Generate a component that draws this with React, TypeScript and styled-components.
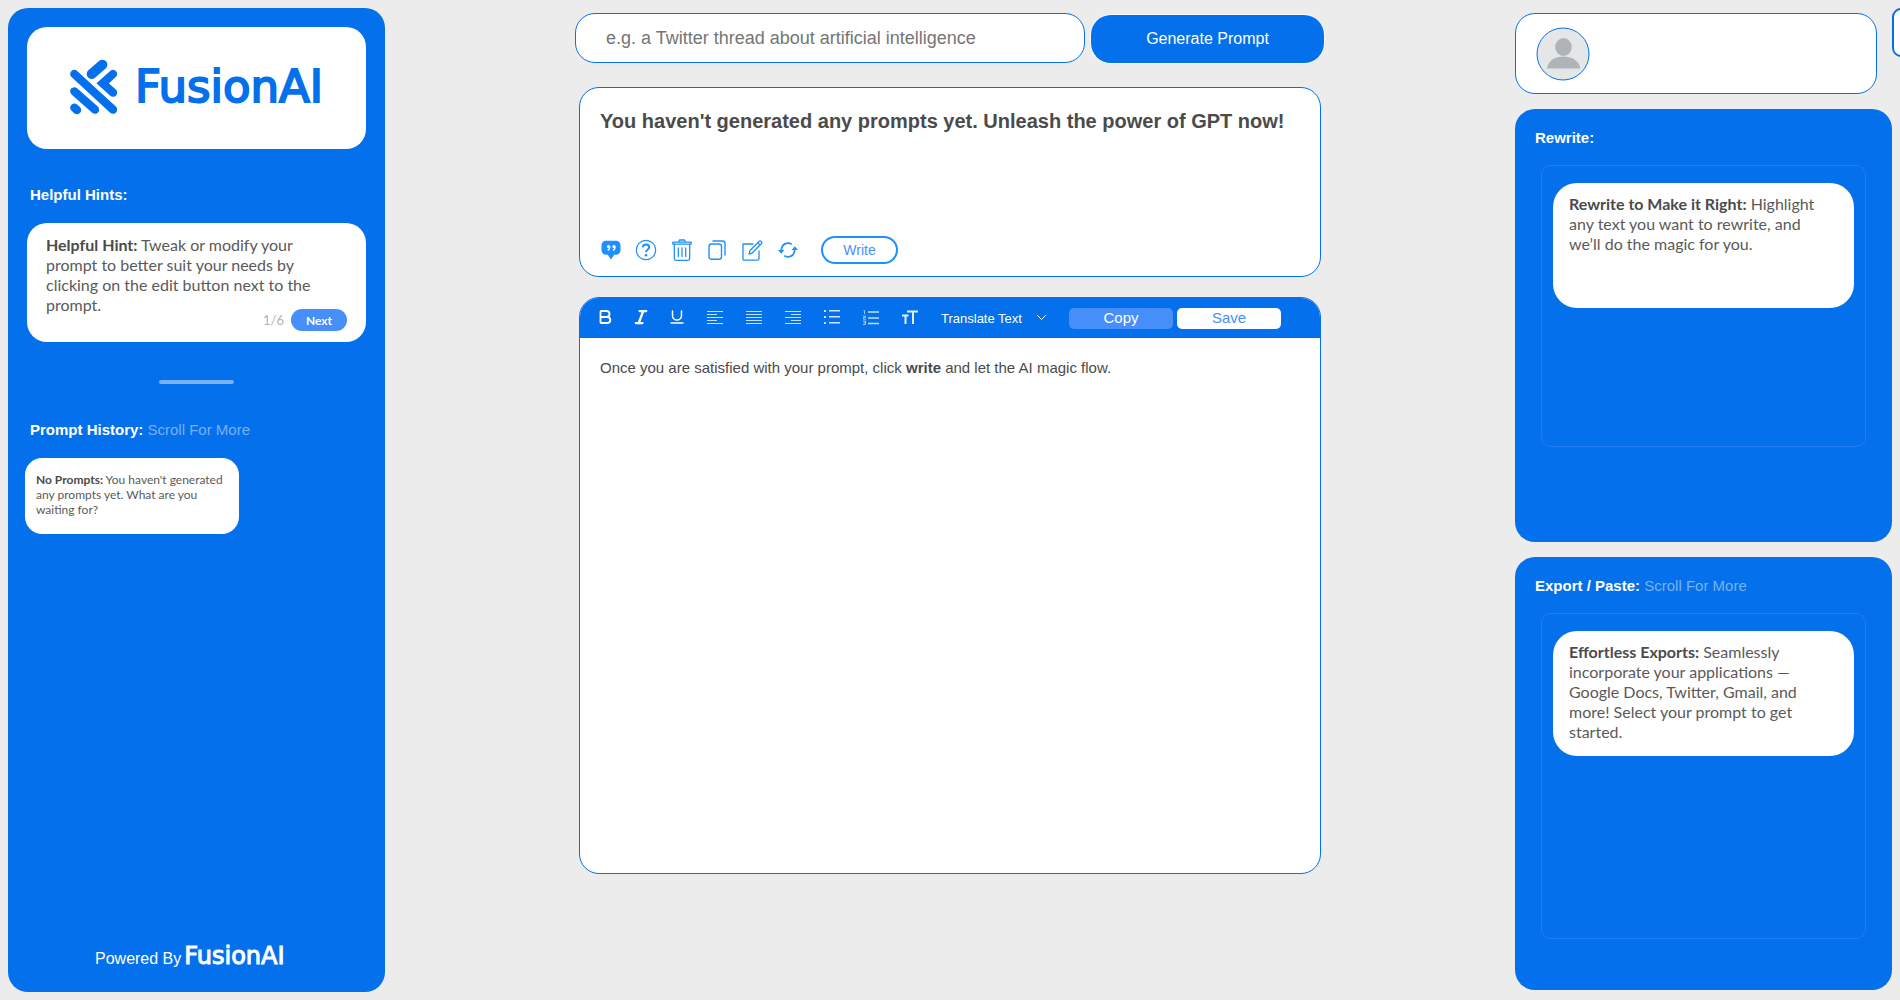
import React from "react";
import styled, { createGlobalStyle } from "styled-components";
import { Bold, Italic, Underline } from "lucide-react";

const blue = "#0570eb";
const sky = "#1e90ff";
const ink = "#4b4b4b";
const sans = `"Liberation Sans", Arial, Helvetica, sans-serif`;
const rounded = `Lato, "Open Sans", sans-serif`;

const GlobalStyle = createGlobalStyle`
  * { box-sizing: border-box; }
  body {
    margin: 0;
    background: #ececec;
    color: ${ink};
    font-family: ${sans};
    overflow: hidden;
  }
  button, input, select { font-family: inherit; }
  button { cursor: pointer; }
  h2, p { margin: 0; }
`;

const Page = styled.div`
  position: relative;
  display: grid;
  grid-template-columns: 377px minmax(0, 750px) 377px;
  justify-content: space-between;
  min-height: 100vh;
  padding: 0 8px;
  overflow: hidden;
`;

const Sidebar = styled.aside`
  display: flex;
  flex-direction: column;
  margin: 8px 0;
  padding: 19px 19px 24px;
  background: ${blue};
  border-radius: 20px;
`;

const LogoCard = styled.div`
  display: flex;
  align-items: center;
  justify-content: center;
  gap: 17px;
  height: 122px;
  padding-bottom: 3px;
  background: #fff;
  border-radius: 20px;
`;

const Wordmark = styled.span<{ $size: number; $stroke: number }>`
  font-family: "DejaVu Sans", sans-serif;
  font-size: ${(p) => p.$size}px;
  line-height: 1;
  -webkit-text-stroke: ${(p) => p.$stroke}px currentColor;
  stroke-linejoin: round;
`;

const LogoWord = styled(Wordmark)`
  color: ${blue};
`;

const Title = styled.h2`
  color: #fff;
  font-size: 15px;
  line-height: 18px;
  font-weight: 700;
`;

const SideTitle = styled(Title)`
  margin-top: 37px;
  padding-left: 3px;
`;

const Faded = styled.span`
  color: #78b1f5;
  font-weight: 400;
`;

const Note = styled.p`
  color: #5a5a5a;
  font-family: ${rounded};
  font-size: 16px;
  line-height: 20px;
  b { color: ${ink}; }
`;

const HintCard = styled.section`
  display: flex;
  flex-direction: column;
  justify-content: space-between;
  height: 119px;
  margin-top: 19px;
  padding: 12px 19px 11px;
  background: #fff;
  border-radius: 20px;
`;

const HintFooter = styled.div`
  display: flex;
  align-items: center;
  justify-content: flex-end;
  gap: 7px;
  margin-top: -6px;
  color: #b3b3b3;
  font-family: ${rounded};
  font-size: 13px;
`;

const NextButton = styled.button`
  width: 56px;
  height: 22px;
  padding: 0;
  border: 0;
  border-radius: 11px;
  background: #468ffa;
  color: #fff;
  font-family: ${rounded};
  font-size: 12px;
  font-weight: 700;
`;

const Divider = styled.div`
  align-self: center;
  width: 75px;
  height: 4px;
  margin-top: 38px;
  border-radius: 2px;
  background: #78b1f5;
`;

const HistoryList = styled.div`
  width: 216px;
  height: 268px;
  margin: 18px 0 0 -3px;
  border: 1px solid #0872ec;
  border-radius: 17px;
`;

const HistoryCard = styled.article`
  height: 76px;
  padding: 14px 11px;
  background: #fff;
  border-radius: 17px;
  color: #5a5a5a;
  font-family: ${rounded};
  font-size: 12px;
  line-height: 15px;
  b { color: ${ink}; }
`;

const Powered = styled.footer`
  display: flex;
  align-items: baseline;
  gap: 3px;
  margin-top: auto;
  padding-left: 68px;
  color: #fff;
  font-size: 16px;
`;

const Main = styled.main`
  padding-top: 13px;
`;

const SearchRow = styled.form`
  display: grid;
  grid-template-columns: minmax(0, 1fr) 233px;
  gap: 6px;
  padding-right: 1px;
`;

const SearchInput = styled.input`
  height: 50px;
  padding: 0 30px;
  border: 1px solid ${blue};
  border-radius: 20px;
  background: #fff;
  font-size: 18px;
  &::placeholder { color: #757575; opacity: 1; }
`;

const GenerateButton = styled.button`
  height: 48px;
  margin-top: 2px;
  border: 0;
  border-radius: 20px;
  background: ${blue};
  box-shadow: 0 0 0 1px #f5f8fc;
  color: #fff;
  font-size: 16px;
`;

const PromptCard = styled.section`
  display: flex;
  flex-direction: column;
  justify-content: space-between;
  height: 190px;
  margin: 24px 4px 0;
  padding: 21px 20px 12px;
  border: 1px solid ${blue};
  border-radius: 20px;
  background: #fff;
`;

const PromptText = styled.h2`
  font-size: 20px;
  line-height: 24px;
  font-weight: 700;
`;

const Actions = styled.div`
  display: flex;
  align-items: center;
  gap: 22px;
`;

const IconGroup = styled.div`
  display: flex;
  justify-content: space-between;
  width: 199px;
`;

const IconButton = styled.button`
  display: flex;
  align-items: center;
  justify-content: center;
  width: 21px;
  height: 22px;
  padding: 0;
  border: 0;
  background: none;
  color: ${sky};
  svg { flex: none; }
`;

const WriteButton = styled.button`
  width: 77px;
  height: 28px;
  padding: 0;
  border: 2px solid ${sky};
  border-radius: 14px;
  background: #fff;
  color: #468ffa;
  font-size: 14px;
`;

const Editor = styled.section`
  height: 577px;
  margin: 20px 4px 0;
  border: 1px solid ${blue};
  border-radius: 20px;
  background: #fff;
  overflow: hidden;
`;

const Toolbar = styled.div`
  display: flex;
  align-items: center;
  height: 40px;
  padding: 0 39px 0 15px;
  background: ${blue};
  color: #fff;
`;

const ToolGroup = styled.div<{ $gap: number }>`
  display: flex;
  gap: ${(p) => p.$gap}px;
  margin-right: 18px;
  padding-bottom: 2px;
`;

const ToolButton = styled.button`
  display: flex;
  align-items: center;
  justify-content: center;
  width: 20px;
  height: 20px;
  padding: 0;
  border: 0;
  background: none;
  color: #fff;
`;

const TranslateField = styled.label`
  display: flex;
  align-items: center;
  margin: 0 auto 0 3px;
`;

const TranslateSelect = styled.select`
  width: 96px;
  padding: 0;
  border: 0;
  appearance: none;
  background: none;
  color: #fff;
  font-size: 13px;
`;

const EditorButton = styled.button<{ $solid?: boolean }>`
  width: 104px;
  height: 21px;
  margin-left: 4px;
  padding: 0 0 2px;
  border: 0;
  border-radius: 5px;
  background: ${(p) => (p.$solid ? "#fff" : "#468ffa")};
  color: ${(p) => (p.$solid ? "#468ffa" : "#fff")};
  font-size: 15px;
`;

const EditorBody = styled.p`
  padding: 20px;
  font-size: 15px;
  line-height: 20px;
`;

const Right = styled.div`
  padding-top: 13px;
`;

const UserCard = styled.section`
  display: flex;
  align-items: center;
  height: 81px;
  margin-right: 15px;
  padding-left: 20px;
  border: 1px solid ${blue};
  border-radius: 20px;
  background: #fff;
`;

const Panel = styled.section`
  height: 433px;
  margin-top: 15px;
  padding: 20px;
  border-radius: 20px;
  background: ${blue};
`;

const PanelFrame = styled.div<{ $height: number }>`
  height: ${(p) => p.$height}px;
  margin: 18px 6px 0;
  padding: 17px 11px;
  border: 1px solid #1f7ef1;
  border-radius: 10px;
`;

const PanelCard = styled.article`
  height: 125px;
  padding: 11px 30px 11px 16px;
  border-radius: 24px;
  background: #fff;
`;

const DrawerTab = styled.button`
  position: absolute;
  top: 8px;
  right: -42px;
  width: 50px;
  height: 49px;
  border: 2px solid ${blue};
  border-radius: 9px;
  background: #fff;
`;

const stroke = {
  fill: "none",
  stroke: "currentColor",
  strokeLinecap: "round" as const,
  strokeLinejoin: "round" as const,
};

const LogoMark = () => (
  <svg width="48" height="56" viewBox="205 175 144 168" aria-hidden="true">
    <g fill="none" stroke={blue} strokeWidth="25" strokeLinecap="round" strokeLinejoin="round">
      <path d="M218 321L226 328M218 272L280 327M218 220L334 327" />
      <path d="M334 220L303 248L334 276" strokeLinejoin="miter" />
      <path d="M270 220L302 192" strokeWidth="30" />
    </g>
  </svg>
);

const QuoteIcon = () => (
  <svg width="20" height="20" viewBox="0 0 20 20">
    <path fill="currentColor" d="M5 .8h10a4.500 4.500 0 0 1 4.500 4.500v5a4.500 4.500 0 0 1-4.500 4.500h-1.800L10 19.500 6.800 14.800H5A4.500 4.500 0 0 1 .5 10.300v-5A4.500 4.500 0 0 1 5 .8z" />
    <g fill="none" stroke="#fff" strokeWidth="1.300">
      <path d="M8.700 6.500Q8.900 9.300 6.700 10.300M14 6.500Q14.200 9.300 12 10.300" />
    </g>
    <circle cx="7.600" cy="6.600" r="1.600" fill="#fff" />
    <circle cx="12.900" cy="6.600" r="1.600" fill="#fff" />
  </svg>
);

const HelpIcon = () => (
  <svg width="22" height="22" viewBox="0 0 22 22" {...stroke}>
    <circle cx="11" cy="11" r="9.700" strokeWidth="1.200" />
    <path strokeWidth="2" strokeLinecap="butt" d="M7.700 8.400Q7.900 5.400 11 5.400T14.200 8.200C14.200 10.600 11 10.500 11 13.300" />
    <circle cx="11" cy="16.200" r="1.300" fill="currentColor" stroke="none" />
  </svg>
);

const TrashIcon = () => (
  <svg width="20" height="22" viewBox="0 0 20 22" {...stroke} strokeWidth="1.300">
    <path d="M.8 3.200h18.400v1.900H.8zM6.500 3L7.500 1h5l1 2" />
    <path d="M2.300 5.500V19.500Q2.300 21.300 4 21.300H16Q17.700 21.300 17.700 19.500V5.500M6.300 9v8.500M10 9v8.500M13.700 9v8.500" />
  </svg>
);

const CopyIcon = () => (
  <svg width="18" height="20" viewBox="0 0 18 20" {...stroke} strokeWidth="1.400">
    <rect x="1" y="4" width="12.500" height="15.200" rx="2.500" />
    <path d="M5 1h9.500Q17 1 17 3.500V15" />
  </svg>
);

const EditIcon = () => (
  <svg width="21" height="21" viewBox="0 0 21 21" {...stroke} strokeWidth="1.300">
    <path d="M11 4H1V19.500Q1 20.200 1.700 20.200H15.500Q17 20.200 17 18.700V11" />
    <path d="M7 14.200L8 10.500 17.300 1.200Q18.200.5 19.200 1.400T19.500 3.500L10.500 12.800zM15.800 2.800L18 5" />
  </svg>
);

const RefreshIcon = () => (
  <svg width="20" height="16" viewBox="0 0 20 16" {...stroke} strokeWidth="1.800" strokeLinecap="butt">
    <path d="M13.700 2.200Q11.500 1 9.500 1.200Q3.500 2 3.200 8.700M6.300 13.800Q8.500 15 10.500 14.800Q16.500 14 16.800 7.300" />
    <path fill="currentColor" stroke="none" d="M0 8L3.200 11.700 6.400 8zM13.600 8L16.800 4.300 20 8z" />
  </svg>
);

const LinesIcon = ({ rows }: { rows: number[][] }) => (
  <svg width="16" height="15" viewBox="0 0 16 15" stroke="#c9e0fb" strokeWidth="1.200">
    {rows.map(([from, to], i) => (
      <path key={i} d={`M${from} ${i * 3 + 1}.5H${to}`} />
    ))}
  </svg>
);

const BulletIcon = () => (
  <svg width="16" height="15" viewBox="0 0 16 15" fill="#d4e6fc">
    {[1, 7, 13].map((y) => (
      <React.Fragment key={y}>
        <rect x="0" y={y - 1} width="2" height="2" />
        <rect x="5" y={y - 1} width="11" height="1.500" />
      </React.Fragment>
    ))}
  </svg>
);

const NumberIcon = () => (
  <svg width="16" height="15" viewBox="0 0 16 15" fill="none" stroke="#c4ddfb">
    <path d="M5 2H16M5 8H16M5 13.500H16" strokeWidth="1.300" />
    <path d="M.5.500H1.500V4M0 6H2.500V7.500H.5V9.200H3M0 11H2.500V14.500H0M.5 12.700H2.500" strokeWidth=".8" />
  </svg>
);

const SizeIcon = () => (
  <svg width="16" height="14" viewBox="0 0 16 14" fill="none" stroke="#e4effd" strokeWidth="2">
    <path d="M5 1.500H16M11 1.500V14M0 5.500H6.500M3.500 5.500V14" />
  </svg>
);

const Chevron = () => (
  <svg width="9" height="6" viewBox="0 0 9 6" {...stroke} aria-hidden="true">
    <path d="M.5.500L4.500 4.500 8.500.500" />
  </svg>
);

const Avatar = () => (
  <svg width="54" height="54" viewBox="0 0 54 54" role="img" aria-label="User avatar">
    <circle cx="27" cy="27" r="26" fill="#e4e6e8" stroke={blue} strokeWidth="1" />
    <ellipse cx="27.500" cy="20" rx="8.300" ry="9" fill="#aeb4b7" />
    <path d="M11 41.500C12 33 20 29.500 27.500 29.500S43 33 44.300 41.500z" fill="#aeb4b7" />
  </svg>
);

const actions = [
  { label: "Quote", icon: <QuoteIcon /> },
  { label: "Help", icon: <HelpIcon /> },
  { label: "Delete", icon: <TrashIcon /> },
  { label: "Duplicate", icon: <CopyIcon /> },
  { label: "Edit", icon: <EditIcon /> },
  { label: "Refresh", icon: <RefreshIcon /> },
];

const styleTools = [
  { label: "Bold", icon: <Bold size={18} strokeWidth={2.5} /> },
  { label: "Italic", icon: <Italic size={18} strokeWidth={3} /> },
  { label: "Underline", icon: <Underline size={18} strokeWidth={2} /> },
];

const blockTools = [
  { label: "Align left", icon: <LinesIcon rows={[[0, 16], [0, 10], [0, 16], [0, 10], [0, 16]]} /> },
  { label: "Justify", icon: <LinesIcon rows={[[0, 16], [0, 16], [0, 16], [0, 16], [0, 16]]} /> },
  { label: "Align right", icon: <LinesIcon rows={[[0, 16], [6, 16], [0, 16], [6, 16], [0, 16]]} /> },
  { label: "Bulleted list", icon: <BulletIcon /> },
  { label: "Numbered list", icon: <NumberIcon /> },
  { label: "Text size", icon: <SizeIcon /> },
];

const toolGroups = [
  { gap: 16, tools: styleTools },
  { gap: 19, tools: blockTools },
];

export default function App() {
  return (
    <>
      <GlobalStyle />
      <Page>
        <Sidebar>
          <LogoCard>
            <LogoMark />
            <LogoWord $size={45} $stroke={2}>FusionAI</LogoWord>
          </LogoCard>
          <SideTitle>Helpful Hints:</SideTitle>
          <HintCard>
            <Note>
              <b>Helpful Hint:</b> Tweak or modify your prompt to better suit your needs by clicking on the edit button next to the prompt.
            </Note>
            <HintFooter>
              <span>1/6</span>
              <NextButton type="button">Next</NextButton>
            </HintFooter>
          </HintCard>
          <Divider />
          <SideTitle>
            Prompt History: <Faded>Scroll For More</Faded>
          </SideTitle>
          <HistoryList>
            <HistoryCard>
              <b>No Prompts:</b> You haven't generated any prompts yet. What are you waiting for?
            </HistoryCard>
          </HistoryList>
          <Powered>
            <span>Powered By</span>
            <Wordmark $size={24} $stroke={1}>FusionAI</Wordmark>
          </Powered>
        </Sidebar>

        <Main>
          <SearchRow onSubmit={(e) => e.preventDefault()}>
            <SearchInput
              type="text"
              aria-label="Prompt topic"
              placeholder="e.g. a Twitter thread about artificial intelligence"
            />
            <GenerateButton type="submit">Generate Prompt</GenerateButton>
          </SearchRow>
          <PromptCard>
            <PromptText>You haven't generated any prompts yet. Unleash the power of GPT now!</PromptText>
            <Actions>
              <IconGroup>
                {actions.map((a) => (
                  <IconButton key={a.label} type="button" aria-label={a.label}>
                    {a.icon}
                  </IconButton>
                ))}
              </IconGroup>
              <WriteButton type="button">Write</WriteButton>
            </Actions>
          </PromptCard>
          <Editor>
            <Toolbar>
              {toolGroups.map((group) => (
                <ToolGroup key={group.gap} $gap={group.gap}>
                  {group.tools.map((t) => (
                    <ToolButton key={t.label} type="button" aria-label={t.label}>
                      {t.icon}
                    </ToolButton>
                  ))}
                </ToolGroup>
              ))}
              <TranslateField>
                <TranslateSelect aria-label="Translate text">
                  <option>Translate Text</option>
                </TranslateSelect>
                <Chevron />
              </TranslateField>
              <EditorButton type="button">Copy</EditorButton>
              <EditorButton type="button" $solid>Save</EditorButton>
            </Toolbar>
            <EditorBody>
              Once you are satisfied with your prompt, click <b>write</b> and let the AI magic flow.
            </EditorBody>
          </Editor>
        </Main>

        <Right>
          <UserCard>
            <Avatar />
          </UserCard>
          <Panel>
            <Title>Rewrite:</Title>
            <PanelFrame $height={282}>
              <PanelCard>
                <Note>
                  <b>Rewrite to Make it Right:</b> Highlight any text you want to rewrite, and we’ll do the magic for you.
                </Note>
              </PanelCard>
            </PanelFrame>
          </Panel>
          <Panel>
            <Title>
              Export / Paste: <Faded>Scroll For More</Faded>
            </Title>
            <PanelFrame $height={326}>
              <PanelCard>
                <Note>
                  <b>Effortless Exports:</b> Seamlessly incorporate your applications — Google Docs, Twitter, Gmail, and more! Select your prompt to get started.
                </Note>
              </PanelCard>
            </PanelFrame>
          </Panel>
        </Right>
        <DrawerTab type="button" aria-label="Open drawer" />
      </Page>
    </>
  );
}
